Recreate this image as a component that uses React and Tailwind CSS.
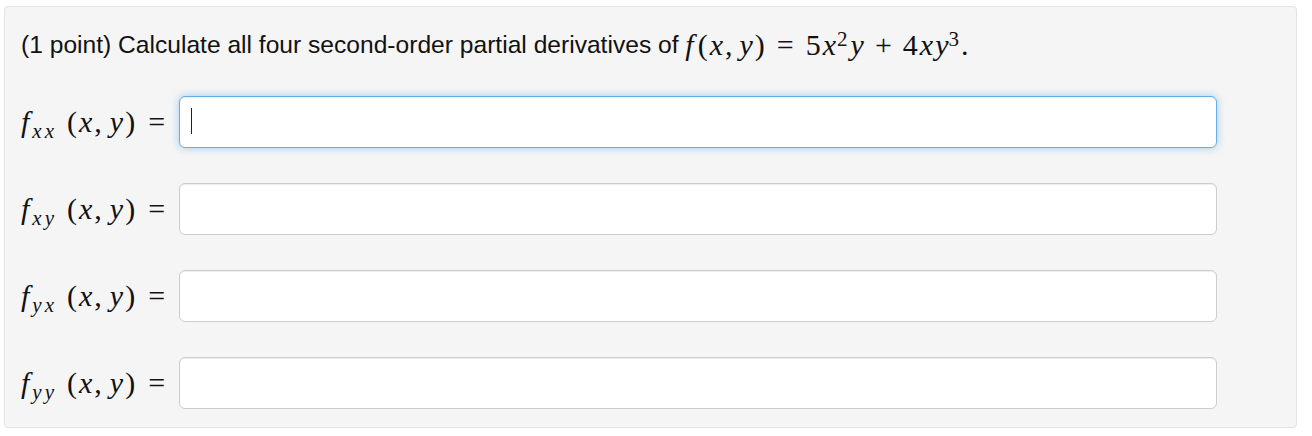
import React from "react";

const serif = { fontFamily: '"Liberation Serif", "DejaVu Serif", serif' };

function Label({ sub }) {
  return (
    <div className="shrink-0 whitespace-nowrap text-[30px] leading-none text-[#111]" style={serif}>
      <span className="italic">f</span>
      <span className="italic text-[21px] relative top-[6px] ml-[3px] tracking-[3px]">{sub}</span>
      <span className="ml-[10px]">(</span>
      <span className="italic ml-[2px] mr-[2px]">x</span>
      <span className="mr-[8px]">,</span>
      <span className="italic">y</span>
      <span className="ml-[2px]">)</span>
      <span className="ml-[13px]">=</span>
    </div>
  );
}

function Row({ sub, focused }) {
  return (
    <div className="flex items-center pr-[79px]">
      <Label sub={sub} />
      <div className="relative ml-[14px] flex-1">
        <input
          readOnly
          className={
            "block h-[52px] w-full rounded-[6px] border bg-white px-3 outline-none " +
            (focused
              ? "border-[#66afe9] shadow-[inset_0_1px_1px_rgba(0,0,0,0.075),0_0_8px_rgba(102,175,233,0.6)]"
              : "border-[#cccccc] shadow-[inset_0_1px_1px_rgba(0,0,0,0.075)]")
          }
        />
        {focused && (
          <span className="absolute left-[12px] top-[12px] h-[26px] w-[1px] bg-[#222]" />
        )}
      </div>
    </div>
  );
}

export default function App() {
  return (
    <div className="w-[1312px] h-[436px] bg-white pt-[6px] pl-[4px]">
      <div className="w-[1293px] h-[422px] rounded-[4px] border border-[#e3e3e3] bg-[#f5f5f5] pl-[16px] pt-[21px]">
        <div
          className="flex items-center whitespace-nowrap text-[24.6px] leading-[34px] text-[#111]"
          style={{ fontFamily: '"Liberation Sans", Arial, sans-serif' }}
        >
          <span>(1 point) Calculate all four second-order partial derivatives of&nbsp;</span>
          <span className="text-[30px]" style={serif}>
            <span className="italic mr-[2px]">f</span>
            <span className="ml-[2px]">(</span>
            <span className="italic ml-[2px] mr-[2px]">x</span>
            <span className="mr-[7px]">,</span>
            <span className="italic">y</span>
            <span className="ml-[2px]">)</span>
            <span className="mx-[12px]">=</span>
            <span>5</span>
            <span className="italic ml-[2px]">x</span>
            <sup className="text-[21px] relative top-[-9px] ml-[1px]">2</sup>
            <span className="italic ml-[3px]">y</span>
            <span className="mx-[11px]">+</span>
            <span>4</span>
            <span className="italic ml-[2px] mr-[2px]">x</span>
            <span className="italic">y</span>
            <sup className="text-[21px] relative top-[-9px]">3</sup>
            <span className="ml-[2px]">.</span>
          </span>
        </div>
        <div className="mt-[34px] flex flex-col gap-[35px]">
          <Row sub="xx" focused />
          <Row sub="xy" />
          <Row sub="yx" />
          <Row sub="yy" />
        </div>
      </div>
    </div>
  );
}
